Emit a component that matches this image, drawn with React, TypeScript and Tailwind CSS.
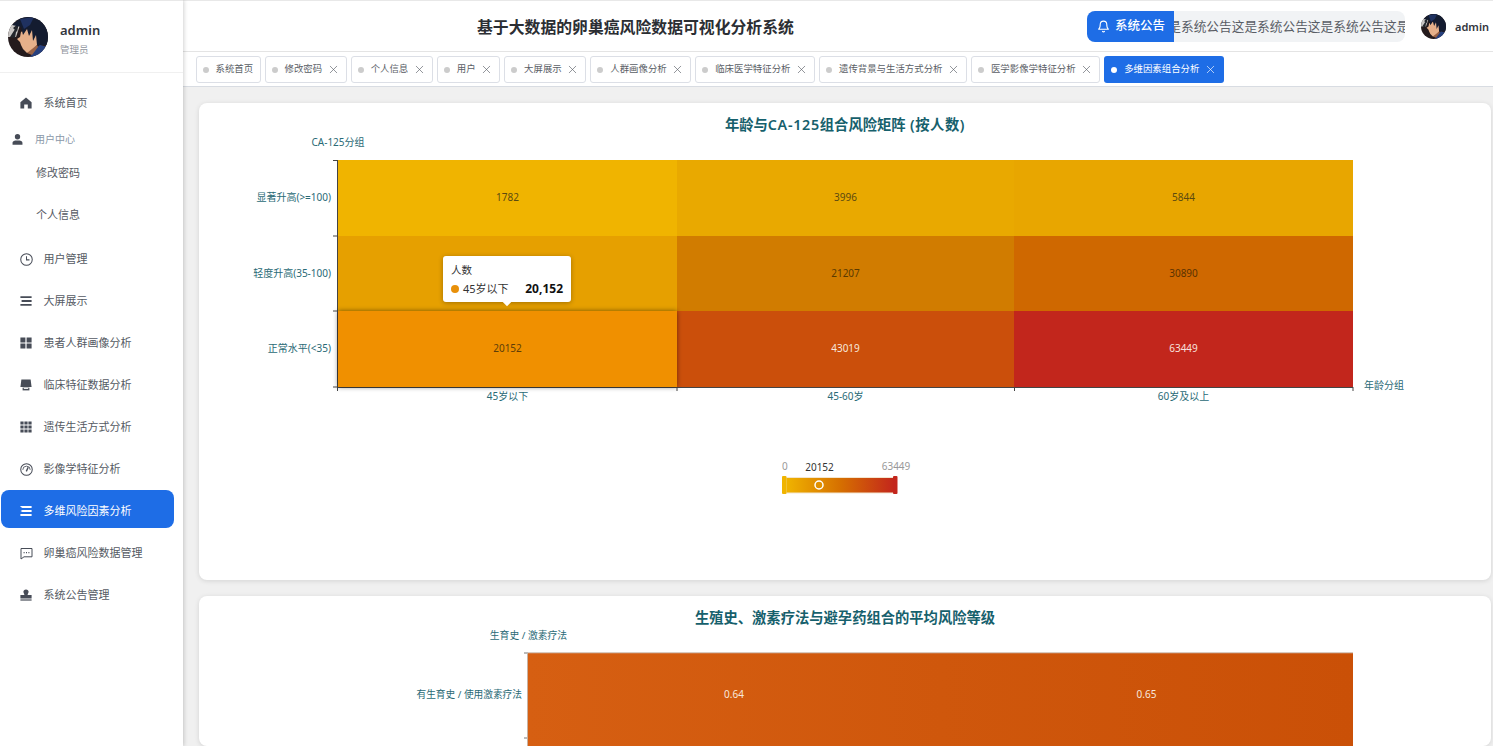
import { FiBell, FiX } from "react-icons/fi";

const font = { fontFamily: '"Noto Sans", "Noto Sans CJK SC", sans-serif' };

const Avatar = ({ className }: { className: string }) => (
	<svg viewBox="0 0 40 40" className={className}>
		<defs>
			<clipPath id="av">
				<circle cx="20" cy="20" r="20" />
			</clipPath>
		</defs>
		<g clipPath="url(#av)">
			<rect width="40" height="40" fill="#241a1c" />
			<path d="M0 8H12L8 20H0Z" fill="#c9c6c4" />
			<path d="M2 20 L9 9 L7 21ZM5 11 L11 6 L9 15Z" fill="#23262c" />
			<path d="M13 15 12 20 9 22 12 25 13 28 15 32 19 36 24 34 29 28 29 14 22 10Z" fill="#e6b08a" />
			<path d="M4 8 L14 0 L30 0 L40 6 L40 28 L29 28 L28 18 L25 24 L24 13 L21 19 L19 12 L15 18 L13 10Z" fill="#141c30" />
			<path d="M12 2 L26 0 L22 8 L16 12Z" fill="#1f3160" />
			<path d="M22 40 L28 31 L32 28 L40 30 L40 40Z" fill="#27407e" />
			<path d="M19 36 L29 28 L30 30 L24 38Z" fill="#9a6245" />
		</g>
	</svg>
);

const HomeIcon = () => (
	<svg viewBox="0 0 12 12" className="h-3 w-3" fill="currentColor">
		<path d="M6 .6 11.6 5.2V11.4H7.8V7.6H4.2V11.4H.4V5.2Z" />
	</svg>
);
const UserIcon = () => (
	<svg viewBox="0 0 12 12" className="h-[11px] w-[11px]" fill="currentColor">
		<circle cx="6" cy="3" r="2.9" />
		<path d="M.6 11.6V9.6C.6 7.6 2.4 7 6 7s5.4.6 5.4 2.6v2Z" />
	</svg>
);
const ClockIcon = () => (
	<svg viewBox="0 0 14 14" className="h-[13px] w-[13px]" fill="none" stroke="currentColor" strokeWidth="1.1">
		<circle cx="7" cy="7" r="6.2" />
		<path d="M7 3.4V7.4H10.2" />
	</svg>
);
const BarsIcon = () => (
	<svg viewBox="0 0 12 12" className="h-3 w-3" fill="currentColor">
		<path d="M.4 1.2h11.2v1.8H.4zM1.6 5.1h10v1.8h-10zM.4 9h11.2v1.8H.4z" />
	</svg>
);
const GridIcon = () => (
	<svg viewBox="0 0 12 12" className="h-3 w-3" fill="currentColor">
		<path d="M.4.6h5v4.8h-5zM6.6.6h5v4.8h-5zM.4 6.6h5v4.8h-5zM6.6 6.6h5v4.8h-5z" />
	</svg>
);
const TrayIcon = () => (
	<svg viewBox="0 0 12 12" className="h-3 w-3" fill="currentColor">
		<path d="M1.4.6h9.2L11.6 8H.4Z" />
		<path d="M2.6 8.6h6.8v2.8H2.6z" />
		<path d="M3.8 8.9h4.4v1H3.8z" fill="#fff" />
	</svg>
);
const Grid3Icon = () => (
	<svg viewBox="0 0 12 12" className="h-3 w-3" fill="currentColor">
		<path d="M.4.4h3.2v3.2H.4zM4.4.4h3.2v3.2H4.4zM8.4.4h3.2v3.2H8.4zM.4 4.4h3.2v3.2H.4zM4.4 4.4h3.2v3.2H4.4zM8.4 4.4h3.2v3.2H8.4zM.4 8.4h3.2v3.2H.4zM4.4 8.4h3.2v3.2H4.4zM8.4 8.4h3.2v3.2H8.4z" />
	</svg>
);
const GaugeIcon = () => (
	<svg viewBox="0 0 14 14" className="h-[13px] w-[13px]" fill="none" stroke="currentColor">
		<circle cx="7" cy="7" r="6.2" strokeWidth="1.1" />
		<path d="M3 7.4A4 4 0 0 1 11 7.4" strokeWidth=".9" />
		<path d="M8.8 4.6 6.8 9" strokeWidth="1.5" />
	</svg>
);
const LinesActiveIcon = () => (
	<svg viewBox="0 0 12 12" className="h-3 w-3" fill="currentColor">
		<path d="M.4 1h11.2v2H2.4L.4 1.8zM2.4 5h9.2v2H2.4L.4 6zM.4 9h11.2v2H.4z" />
	</svg>
);
const ChatIcon = () => (
	<svg viewBox="0 0 13 13" className="h-[13px] w-[13px]" fill="none" stroke="currentColor" strokeWidth="1">
		<path d="M1 1.5h11V9.8H4L1 12Z" />
		<path d="M3.6 5.6h1M6 5.6h1M8.4 5.6h1" strokeWidth="1.2" />
	</svg>
);
const StampIcon = () => (
	<svg viewBox="0 0 12 12" className="h-3 w-3" fill="currentColor">
		<path d="M6 .4c1.6 0 2.6 1 2.6 2.4 0 1.2-.8 2-1 3.2H11.6V9.4H.4V6H4.4c-.2-1.2-1-2-1-3.2C3.4 1.4 4.4.4 6 .4Z" />
		<path d="M.4 10.4h11.2v1.2H.4z" />
	</svg>
);

const items = [
	{ label: "用户管理", icon: <ClockIcon /> },
	{ label: "大屏展示", icon: <BarsIcon /> },
	{ label: "患者人群画像分析", icon: <GridIcon /> },
	{ label: "临床特征数据分析", icon: <TrayIcon /> },
	{ label: "遗传生活方式分析", icon: <Grid3Icon /> },
	{ label: "影像学特征分析", icon: <GaugeIcon /> },
	{ label: "多维风险因素分析", icon: <LinesActiveIcon />, active: true },
	{ label: "卵巢癌风险数据管理", icon: <ChatIcon /> },
	{ label: "系统公告管理", icon: <StampIcon /> },
];

const NavItem = ({ label, icon, active }: { label: string; icon: React.ReactNode; active?: boolean }) => (
	<div
		className={`ml-px flex h-[38px] w-[173px] items-center rounded-lg pt-[4px] pl-[19px] text-[11px] ${
			active ? "bg-[#1e6de6] text-white" : "text-[#555a63]"
		}`}
	>
		<span className={`flex w-[23.5px] shrink-0 ${active ? "text-white" : "text-[#474c57]"}`}>{icon}</span>
		{label}
	</div>
);

const Sidebar = () => (
	<aside className="z-10 flex h-full w-[183px] shrink-0 flex-col border-t border-[#e8e8e8] bg-white shadow-[1px_0_4px_rgba(0,0,0,0.18)]">
		<div className="flex h-[72px] shrink-0 items-center gap-3 border-b border-[#f0f0f0] pl-2">
			<Avatar className="h-10 w-10" />
			<div className="pt-[4px]">
				<div className="text-[13px] leading-[18px] font-semibold text-[#33363d]">admin</div>
				<div className="mt-[4px] text-[9.5px] leading-[14px] text-[#8f949c]">管理员</div>
			</div>
		</div>
		<nav className="mt-[9px] flex flex-col">
			<NavItem label="系统首页" icon={<HomeIcon />} />
			<div className="flex h-[32px] items-center gap-[12px] pt-[6px] pl-[12px] text-[10px] text-[#8a97a8]">
				<span className="flex text-[#474c57]">
					<UserIcon />
				</span>
				用户中心
			</div>
			<div className="flex h-[42px] items-center pl-[36px] text-[11px] text-[#555a63]">修改密码</div>
			<div className="flex h-[42px] items-center pl-[36px] text-[11px] text-[#555a63]">个人信息</div>
			<div className="mt-[2px] flex flex-col gap-1">
				{items.map((item) => (
					<NavItem key={item.label} {...item} />
				))}
			</div>
		</nav>
	</aside>
);

const Header = () => (
	<header className="flex h-[52px] shrink-0 items-center border-y border-t-[#e8e8e8] border-b-[#e4e4e4] bg-white">
		<h1 className="ml-[294px] w-[317px] pt-[3px] text-[15.85px] font-semibold whitespace-nowrap text-[#2b2e33]">
			基于大数据的卵巢癌风险数据可视化分析系统
		</h1>
		<div className="relative ml-[293px] flex h-[31px] w-[318px] items-center overflow-hidden rounded-lg bg-[#f1f3f5]">
			<div className="ml-[68.6px] pt-[2px] text-[12.7px] whitespace-nowrap text-[#5a5e66]">
				这是系统公告这是系统公告这是系统公告这是
			</div>
			<div className="absolute top-0 left-0 flex h-full w-[87px] items-center gap-[5px] bg-[#1e6de6] pt-[1px] pl-[10px] text-[12.5px] font-medium text-white">
				<FiBell className="h-[13px] w-[13px] shrink-0" />
				<span>系统公告</span>
			</div>
		</div>
		<Avatar className="ml-4 h-[25px] w-[25px]" />
		<span className="ml-[9px] pt-[2px] text-[11px] font-semibold text-[#33363d]">admin</span>
	</header>
);

const tabs = [
	"修改密码",
	"个人信息",
	"用户",
	"大屏展示",
	"人群画像分析",
	"临床医学特征分析",
	"遗传背景与生活方式分析",
	"医学影像学特征分析",
];

const TabBar = () => (
	<div className="flex h-[35px] shrink-0 items-center gap-1 border-b border-[#d8dce2] bg-white pt-[1px] pl-[12.5px]">
		<div className="flex h-[27px] w-[65px] items-center rounded-[3px] border border-[#dcdfe6] pl-[6px] text-[9.42px] text-[#5a5e66]">
			<span className="mr-[7px] h-[6px] w-[6px] rounded-full bg-[#cccccc]" />
			系统首页
		</div>
		{tabs.map((t) => (
			<div
				key={t}
				className="flex h-[27px] items-center rounded-[3px] border border-[#dcdfe6] pr-[6px] pl-[6px] text-[9.42px] whitespace-nowrap text-[#5a5e66]"
			>
				<span className="mr-[7px] h-[6px] w-[6px] rounded-full bg-[#cccccc]" />
				{t}
				<FiX className="ml-[4.5px] h-[13px] w-[13px] stroke-[1.2]" />
			</div>
		))}
		<div className="flex h-[27px] items-center rounded-[3px] bg-[#1e6de6] pr-[7px] pl-[7px] text-[9.42px] whitespace-nowrap text-white">
			<span className="mr-[7px] h-[6px] w-[6px] rounded-full bg-white" />
			多维因素组合分析
			<FiX className="ml-[4.5px] h-[13px] w-[13px] stroke-[1.2]" />
		</div>
	</div>
);

const axisColor = "#2a6a76";
const xs = [338, 677, 1014, 1353];
const ys = [160, 236, 311, 387];
const cells = [
	[
		{ v: "1782", c: "#f0b400", t: "#5c4a10" },
		{ v: "3996", c: "#e9a900", t: "#5c4a10" },
		{ v: "5844", c: "#e8a600", t: "#5c4a10" },
	],
	[
		{ v: "", c: "#e6a000", t: "#5c4a10" },
		{ v: "21207", c: "#d17c00", t: "#5b3a00" },
		{ v: "30890", c: "#cf6800", t: "#5b3200" },
	],
	[
		{ v: "", c: "#cb4f0b", t: "#fff" },
		{ v: "43019", c: "#cb4f0b", t: "#f8e8dc" },
		{ v: "63449", c: "#c2261c", t: "#f8e0dc" },
	],
];
const rowLabels = ["显著升高(>=100)", "轻度升高(35-100)", "正常水平(<35)"];
const colLabels = ["45岁以下", "45-60岁", "60岁及以上"];

const AgeChart = () => (
	<svg viewBox="199 136 1292 444" className="block h-[444px] w-full" style={font}>
		<defs>
			<filter id="hl" x="-5%" y="-10%" width="110%" height="120%">
				<feDropShadow dx="0" dy="0" stdDeviation="2.5" floodColor="#000" floodOpacity="0.5" />
			</filter>
			<linearGradient id="vm" x1="0" x2="1" y1="0" y2="0">
				<stop offset="0" stopColor="#f0b400" />
				<stop offset="0.5" stopColor="#d67000" />
				<stop offset="1" stopColor="#c3261c" />
			</linearGradient>
		</defs>
		<text x="338" y="146" textAnchor="middle" fontSize="10" fill={axisColor}>
			CA-125分组
		</text>
		{cells.map((row, r) =>
			row.map((cell, c) => (
				<g key={`${r}-${c}`}>
					<rect x={xs[c]} y={ys[r]} width={xs[c + 1] - xs[c]} height={ys[r + 1] - ys[r]} fill={cell.c} />
					{cell.v && (
						<text
							x={(xs[c] + xs[c + 1]) / 2}
							y={(ys[r] + ys[r + 1]) / 2 + 3}
							textAnchor="middle"
							fontSize="10"
							fill={cell.t}
						>
							{cell.v}
						</text>
					)}
				</g>
			)),
		)}
		<path
			d="M337.5 160V387.5H1353M333 160.5h5M333 236h5M333 311h5M333 387h5M337.5 387v4M677 387v4M1014.5 387v4M1353 387v4"
			fill="none"
			stroke="#444"
			strokeWidth="1"
		/>
		<rect x="338" y="311" width="339" height="76" fill="#f09000" filter="url(#hl)" />
		<text x="507.5" y="351.5" textAnchor="middle" fontSize="10" fill="#5e3d08">
			20152
		</text>
		{rowLabels.map((l, i) => (
			<text key={l} x="331" y={(ys[i] + ys[i + 1]) / 2 + 3} textAnchor="end" fontSize="10" fill={axisColor}>
				{l}
			</text>
		))}
		{colLabels.map((l, i) => (
			<text key={l} x={(xs[i] + xs[i + 1]) / 2} y="400" textAnchor="middle" fontSize="10" fill={axisColor}>
				{l}
			</text>
		))}
		<text x="1364" y="389" fontSize="10" fill={axisColor}>
			年龄分组
		</text>

		<text x="782" y="470" fontSize="10" fill="#999">
			0
		</text>
		<text x="819.5" y="471" textAnchor="middle" fontSize="10" fill="#333">
			20152
		</text>
		<text x="896" y="470" textAnchor="middle" fontSize="10" fill="#999">
			63449
		</text>
		<rect x="786" y="477.5" width="108" height="15.5" fill="url(#vm)" stroke="#f3e6cf" strokeWidth="1" />
		<rect x="782" y="476" width="4.5" height="18" rx="1" fill="#f0b400" />
		<rect x="893" y="476" width="4.5" height="18" rx="1" fill="#c3261c" />
		<circle cx="819" cy="485" r="4" fill="#e09000" stroke="#fff" strokeWidth="1.5" />
	</svg>
);

const Tooltip = () => (
	<div className="absolute top-[153px] left-[244px] h-[46px] w-[128px] rounded-[3px] bg-white px-2 pt-[7px] text-[10.5px] text-[#333] shadow-[0_1px_5px_rgba(0,0,0,0.3)]">
		<div className="leading-[14px]">人数</div>
		<div className="mt-[4px] flex items-center text-[11px] leading-[16px]">
			<span className="mr-[5px] h-2 w-2 rounded-full bg-[#e8900a]" />
			<span className="-ml-px">45岁以下</span>
			<span className="ml-auto text-[12px] font-bold text-[#111]">20,152</span>
		</div>
		<div className="absolute -bottom-[3px] left-[61px] h-[6px] w-[6px] rotate-45 bg-white" />
	</div>
);

const RiskChart = () => (
	<svg viewBox="199 629 1292 117" className="block h-[117px] w-full" style={font}>
		<defs>
			<linearGradient id="risk" x1="0" x2="1" y1="0" y2="0">
				<stop offset="0" stopColor="#d65f12" />
				<stop offset="0.5" stopColor="#cf570c" />
				<stop offset="1" stopColor="#ca5007" />
			</linearGradient>
		</defs>
		<text x="528.5" y="639" textAnchor="middle" fontSize="9.8" fill={axisColor}>
			生育史 / 激素疗法
		</text>
		<rect x="528" y="653" width="825" height="93" fill="url(#risk)" />
		<text x="734" y="698" textAnchor="middle" fontSize="10" fill="#f8e8dc">
			0.64
		</text>
		<text x="1146.5" y="698" textAnchor="middle" fontSize="10" fill="#f8e8dc">
			0.65
		</text>
		<path d="M524 653h4M524 738h4" fill="none" stroke="#777" strokeWidth="1" />
		<path d="M527.5 653V746M528 652.8H1353" fill="none" stroke="#c9b3a3" strokeWidth="1" />
		<text x="522" y="698" textAnchor="end" fontSize="9.7" fill={axisColor}>
			有生育史 / 使用激素疗法
		</text>
	</svg>
);

const Card = ({ title, children, className }: { title: React.ReactNode; children: React.ReactNode; className: string }) => (
	<section className={`relative shrink-0 overflow-hidden rounded-lg bg-white shadow-[0_1px_5px_rgba(0,0,0,0.12)] ${className}`}>
		<h2 className="pt-[11px] text-center text-[14.3px] leading-[22px] font-semibold text-[#16606c]">{title}</h2>
		{children}
	</section>
);

export default function App() {
	return (
		<div className="flex h-screen w-full overflow-hidden bg-white" style={font}>
			<Sidebar />
			<main className="flex min-w-0 flex-1 flex-col">
				<Header />
				<TabBar />
				<div className="flex flex-1 flex-col gap-4 overflow-hidden bg-[#f0f0f0] pt-[16px] pr-[2px] pl-4">
					<Card
						title={
							<>
								年龄与<span className="tracking-[0.7px]">CA-125</span>组合风险矩阵
								<span className="tracking-[0.6px]"> (按人数)</span>
							</>
						}
						className="h-[477px]"
					>
						<AgeChart />
						<Tooltip />
					</Card>
					<Card title="生殖史、激素疗法与避孕药组合的平均风险等级" className="h-[150px]">
						<RiskChart />
					</Card>
				</div>
			</main>
		</div>
	);
}
